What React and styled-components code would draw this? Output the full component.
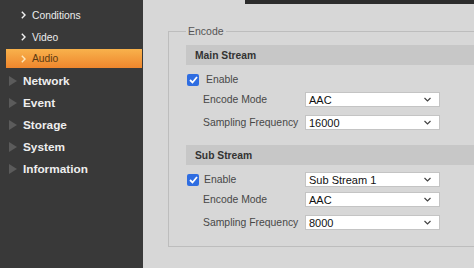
import React from 'react';
import styled, { createGlobalStyle } from 'styled-components';

const GlobalStyle = createGlobalStyle`
  html, body {
    margin: 0;
    padding: 0;
    background: #d7d7d7;
    font-family: "Liberation Sans", Arial, sans-serif;
  }
`;

const Page = styled.div`
  display: flex;
  width: 474px;
  height: 268px;
  overflow: hidden;
`;

const Sidebar = styled.nav`
  width: 143px;
  flex-shrink: 0;
  background: #393939;
  padding-top: 4px;
  box-sizing: border-box;
`;

const SubItem = styled.div`
  display: flex;
  align-items: center;
  height: ${(p) => (p.active ? '19px' : '22px')};
  margin: ${(p) => (p.active ? '1px 1px 2px 6px' : '0')};
  padding-left: ${(p) => (p.active ? '15px' : '21px')};
  font-size: 10.3px;
  color: ${(p) => (p.active ? '#5b3a12' : '#ececec')};
  background: ${(p) => (p.active ? 'linear-gradient(#f8b24c, #ef862d)' : 'transparent')};
  svg {
    margin-right: 6px;
  }
`;

const GroupItem = styled.div`
  display: flex;
  align-items: center;
  height: 22px;
  padding-left: 9px;
  font-size: 11.8px;
  font-weight: bold;
  color: #eeeeee;
  svg {
    margin-right: 6px;
  }
`;

const Main = styled.main`
  flex: 1;
  background: #d7d7d7;
  overflow: hidden;
`;

const TopBar = styled.div`
  height: 4px;
  margin-left: 102px;
  background: #2c2c2c;
`;

const Fieldset = styled.fieldset`
  width: 330px;
  margin: 21px 0 0 25px;
  padding: 8px 0 12px 17px;
  border: 1px solid #bdbdbd;
  border-right: none;
  box-sizing: border-box;
`;

const Legend = styled.legend`
  padding: 0 2px;
  font-size: 10.5px;
  line-height: 12px;
  color: #555;
`;

const SectionHeader = styled.div`
  height: 20px;
  display: flex;
  align-items: center;
  padding-left: 9px;
  background: #c7c7c7;
  font-size: 10.3px;
  font-weight: bold;
  color: #333;
  margin-top: ${(p) => (p.first ? '0' : '11px')};
`;

const Row = styled.div`
  display: flex;
  align-items: center;
  height: 23px;
  padding-left: ${(p) => (p.check ? '1px' : '17px')};
  padding-top: ${(p) => (p.check ? '3px' : '0')};
  margin-bottom: ${(p) => (p.check ? '-3px' : '0')};
`;

const Label = styled.span`
  width: ${(p) => (p.check ? '118px' : '102px')};
  flex-shrink: 0;
  white-space: nowrap;
  display: flex;
  align-items: center;
  font-size: 10.4px;
  color: #484848;
`;

const Box = styled.span`
  width: 12px;
  height: 12px;
  border-radius: 2px;
  background: #2f6de1;
  display: inline-flex;
  align-items: center;
  justify-content: center;
  margin-right: ${(p) => p.gap}px;
`;

const Select = styled.div`
  width: 135px;
  height: 15px;
  box-sizing: border-box;
  background: #fff;
  border: 1px solid #c4c4c4;
  display: flex;
  align-items: center;
  justify-content: space-between;
  padding: 0 8px 0 3px;
  font-size: 11px;
  color: #111;
`;

const Chevron = () => (
  <svg width="7" height="5" viewBox="0 0 7 5">
    <path d="M0.5 1 L3.5 4 L6.5 1" fill="none" stroke="#444" strokeWidth="1.2" />
  </svg>
);

const Arrow = ({ color }) => (
  <svg width="5" height="8" viewBox="0 0 5 8">
    <path d="M0.8 0.8 L4 4 L0.8 7.2" fill="none" stroke={color} strokeWidth="1.4" />
  </svg>
);

const Triangle = () => (
  <svg width="8" height="10" viewBox="0 0 8 10">
    <path d="M0 0 L8 5 L0 10 Z" fill="#5b5b5b" />
  </svg>
);

const Check = () => (
  <svg width="9" height="8" viewBox="0 0 9 8">
    <path d="M1 4 L3.5 6.5 L8 1" fill="none" stroke="#fff" strokeWidth="1.8" />
  </svg>
);

const Dropdown = ({ value }) => (
  <Select>
    <span>{value}</span>
    <Chevron />
  </Select>
);

const Stream = ({ title, first, streamSelect, frequency }) => (
  <>
    <SectionHeader first={first}>{title}</SectionHeader>
    <Row check>
      <Label check>
        <Box gap={first ? 7 : 5}>
          <Check />
        </Box>
        Enable
      </Label>
      {streamSelect && <Dropdown value={streamSelect} />}
    </Row>
    <Row>
      <Label>Encode Mode</Label>
      <Dropdown value="AAC" />
    </Row>
    <Row>
      <Label>Sampling Frequency</Label>
      <Dropdown value={frequency} />
    </Row>
  </>
);

const App = () => {
  const subs = ['Conditions', 'Video', 'Audio'];
  const groups = ['Network', 'Event', 'Storage', 'System', 'Information'];
  return (
    <Page>
      <GlobalStyle />
      <Sidebar>
        {subs.map((s) => (
          <SubItem key={s} active={s === 'Audio'}>
            <Arrow color={s === 'Audio' ? '#fde7b8' : '#f2f2f2'} />
            {s}
          </SubItem>
        ))}
        {groups.map((g) => (
          <GroupItem key={g}>
            <Triangle />
            {g}
          </GroupItem>
        ))}
      </Sidebar>
      <Main>
        <TopBar />
        <Fieldset>
          <Legend>Encode</Legend>
          <Stream title="Main Stream" first frequency="16000" />
          <Stream title="Sub Stream" streamSelect="Sub Stream 1" frequency="8000" />
        </Fieldset>
      </Main>
    </Page>
  );
};

export default App;
